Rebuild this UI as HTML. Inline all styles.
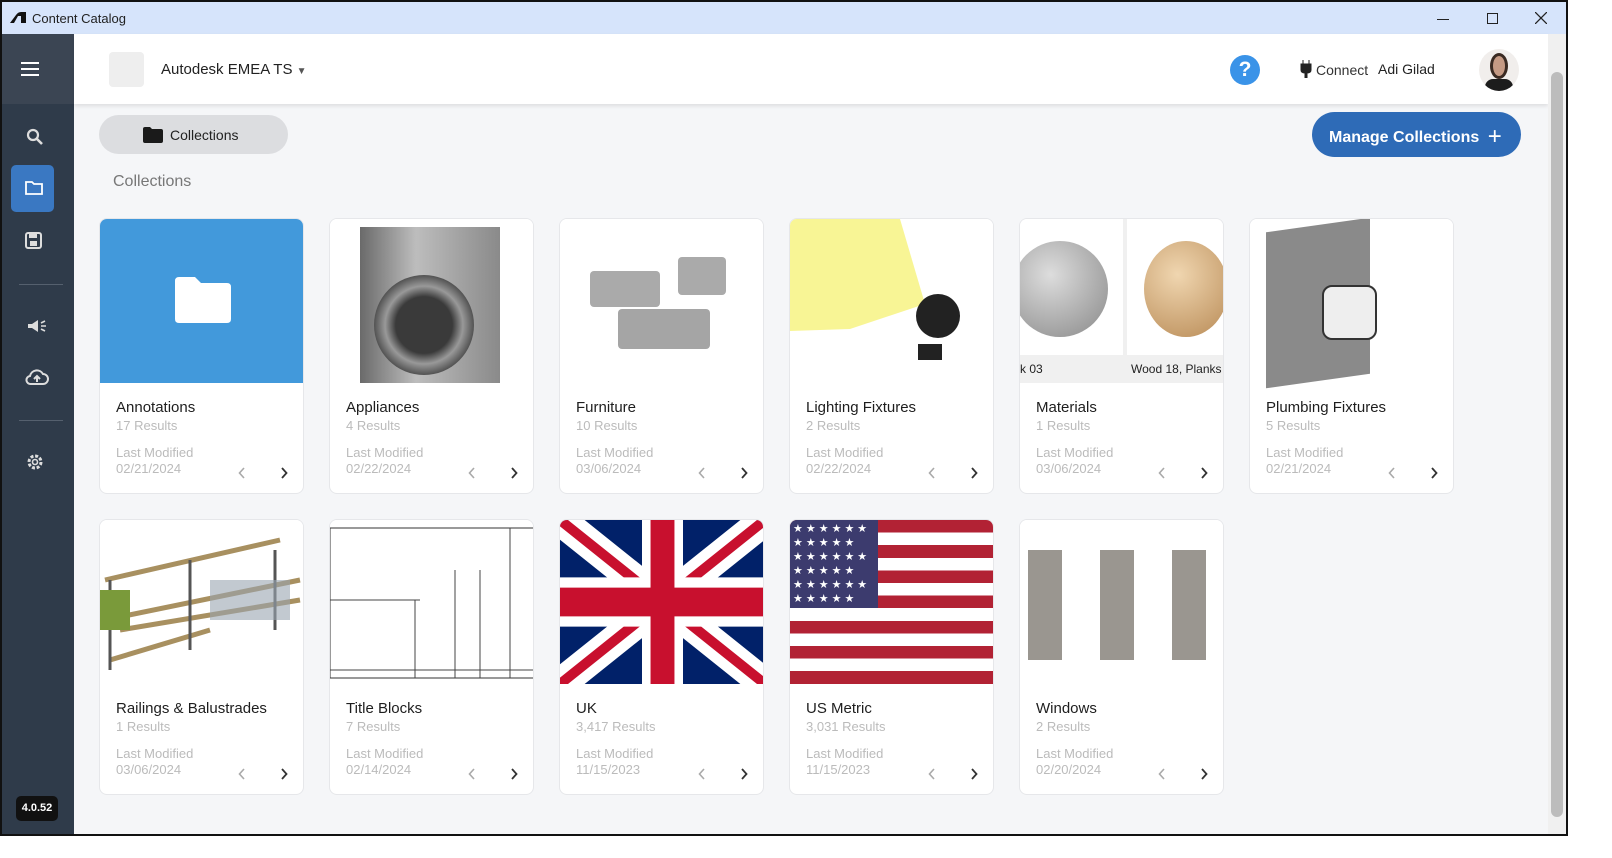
<!DOCTYPE html>
<html><head><meta charset="utf-8"><style>
*{box-sizing:border-box;margin:0;padding:0}
body{width:1612px;height:858px;background:#fff;font-family:"Liberation Sans",sans-serif;position:relative;overflow:hidden}
.win{position:absolute;left:0;top:0;width:1568px;height:836px;border:2px solid #111;background:#f5f6f8;overflow:hidden}
.title{position:absolute;left:0;top:0;right:0;height:32px;background:#d6e4fb;font-size:13px;color:#222}
.side{position:absolute;left:0;top:32px;width:72px;bottom:0;background:#2f3b4a}
.sidetop{position:absolute;left:0;top:0;width:72px;height:70px;background:#3b4553}
.hdr{position:absolute;left:72px;top:32px;right:18px;height:70px;background:#fff;box-shadow:0 2px 4px rgba(0,0,0,.1)}
.scroll{position:absolute;right:0;top:32px;width:18px;bottom:0;background:#f0f0f0}
.thumb{position:absolute;right:3px;top:38px;width:12px;height:745px;background:#bcbcbc;border-radius:6px}
.card{position:absolute;width:205px;height:276px;background:#fff;border:1px solid #e6e7ea;border-radius:8px;overflow:hidden}
.img{position:absolute;left:0;top:0;width:205px;height:164px;background:#fff}
.nm{position:absolute;left:16px;top:180px;font-size:15px;color:#1e1e1e}
.rs{position:absolute;left:16px;top:199px;font-size:13px;color:#bbb}
.lm{position:absolute;left:16px;top:226px;font-size:13px;color:#bbb;line-height:16px}
.ar{position:absolute;top:248px;width:8px;height:12px}
</style></head><body>
<svg width="0" height="0" style="position:absolute"><defs>
<symbol id="l" viewBox="0 0 8 12"><path d="M6 1L1.5 6L6 11" stroke="#aaa" stroke-width="1.6" fill="none"/></symbol>
<symbol id="r" viewBox="0 0 8 12"><path d="M2 1L6.5 6L2 11" stroke="#333" stroke-width="1.8" fill="none"/></symbol>
</defs></svg>
<div class="win">
 <div class="title">
  <svg style="position:absolute;left:8px;top:10px" width="16" height="11"><path d="M0 11 L6 3 Q8 0 11 0 L16 0 L16 11 L11 11 L11 4 L8 4 L4 11Z" fill="#111"/></svg>
  <span style="position:absolute;left:30px;top:9px">Content Catalog</span>
  <div style="position:absolute;left:1435px;top:17px;width:12px;height:1px;background:#222"></div>
  <div style="position:absolute;left:1485px;top:11px;width:11px;height:11px;border:1.5px solid #222"></div>
  <svg style="position:absolute;left:1533px;top:10px" width="12" height="12"><path d="M0 0L12 12M12 0L0 12" stroke="#222" stroke-width="1.3"/></svg>
 </div>
 <div class="side">
  <div class="sidetop"></div>
  <svg style="position:absolute;left:19px;top:28px" width="18" height="14"><path d="M0 1H18M0 7H18M0 13H18" stroke="#fff" stroke-width="2"/></svg>
  <svg style="position:absolute;left:24px;top:94px" width="18" height="18"><circle cx="7" cy="7" r="5" stroke="#ddd" stroke-width="2.2" fill="none"/><path d="M11 11L16 16" stroke="#ddd" stroke-width="2.6"/></svg>
  <div style="position:absolute;left:9px;top:131px;width:43px;height:47px;background:#3a78c2;border-radius:5px"></div>
  <svg style="position:absolute;left:23px;top:147px" width="18" height="14"><path d="M1 1H7L9 3H17V13H1Z" stroke="#fff" stroke-width="1.8" fill="none"/></svg>
  <svg style="position:absolute;left:23px;top:198px" width="18" height="18"><rect x="1" y="1" width="15" height="15" rx="2" stroke="#ddd" stroke-width="2" fill="none"/><rect x="5" y="9" width="7" height="5" fill="#ddd"/><rect x="4" y="2" width="8" height="4" fill="#ddd"/></svg>
  <div style="position:absolute;left:17px;top:250px;width:44px;height:1px;background:#55606e"></div>
  <svg style="position:absolute;left:24px;top:284px" width="22" height="18"><path d="M2 6H6L12 2V14L6 10H2Z" fill="#ddd"/><path d="M15 5L19 3M15 8H20M15 11L19 13" stroke="#ddd" stroke-width="1.6"/></svg>
  <svg style="position:absolute;left:23px;top:334px" width="24" height="18"><path d="M6 16H18A5 5 0 0 0 18 6A7 7 0 0 0 5 8A4 4 0 0 0 6 16Z" stroke="#ddd" stroke-width="2" fill="none"/><path d="M12 14V8M9 11L12 8L15 11" stroke="#ddd" stroke-width="2" fill="none"/></svg>
  <div style="position:absolute;left:17px;top:386px;width:44px;height:1px;background:#55606e"></div>
  <svg style="position:absolute;left:23px;top:418px" width="20" height="20" viewBox="0 0 20 20"><circle cx="10" cy="10" r="6" stroke="#ddd" stroke-width="3" fill="none" stroke-dasharray="3 1.7"/><circle cx="10" cy="10" r="2.5" stroke="#ddd" stroke-width="1.6" fill="none"/></svg>
  <div style="position:absolute;left:14px;top:762px;width:42px;height:25px;background:#111;border-radius:5px;color:#fff;font-size:11px;font-weight:bold;text-align:center;line-height:25px">4.0.52</div>
 </div>
 <div class="hdr">
  <div style="position:absolute;left:35px;top:18px;width:35px;height:35px;background:#eee;border-radius:4px"></div>
  <div style="position:absolute;left:87px;top:27px;font-size:15px;color:#222">Autodesk EMEA TS <span style="font-size:10px;color:#555">▼</span></div>
  <div style="position:absolute;left:1156px;top:21px;width:30px;height:30px;border-radius:50%;background:#3a93e8;color:#fff;font-weight:bold;font-size:21px;text-align:center;line-height:30px">?</div>
  <svg style="position:absolute;left:1226px;top:26px" width="12" height="18"><path d="M3 0V4M9 0V4M1 4H11V10Q11 13 7 13V18H5V13Q1 13 1 10Z" fill="#222" stroke="#222" stroke-width="1"/></svg>
  <div style="position:absolute;left:1242px;top:28px;font-size:14px;color:#333">Connect</div>
  <div style="position:absolute;left:1304px;top:27px;font-size:14px;color:#222">Adi Gilad</div>
  <div style="position:absolute;left:1405px;top:15px;width:40px;height:42px;border-radius:50%;background:#f1eeec;overflow:hidden"><div style="position:absolute;left:11px;top:4px;width:18px;height:26px;border-radius:50%;background:#c59a84;border:3px solid #3a2a22"></div><div style="position:absolute;left:6px;top:30px;width:28px;height:14px;background:#1c1c1c;border-radius:8px 8px 0 0"></div></div>
 </div>
 <div style="position:absolute;left:97px;top:113px;width:189px;height:39px;background:#dcdde0;border-radius:20px"></div>
 <svg style="position:absolute;left:141px;top:125px" width="20" height="16"><path d="M0 2Q0 0 2 0H7L9 2H18Q20 2 20 4V14Q20 16 18 16H2Q0 16 0 14Z" fill="#1a1a1a"/></svg>
 <div style="position:absolute;left:168px;top:125px;font-size:14px;color:#222">Collections</div>
 <div style="position:absolute;left:1310px;top:110px;width:209px;height:45px;background:#2e6bb7;border-radius:23px;color:#fff;font-size:16px;font-weight:bold;line-height:45px;padding-left:17px">Manage Collections <span style="font-size:24px;font-weight:normal;position:relative;top:2px;left:4px">+</span></div>
 <div style="position:absolute;left:111px;top:171px;font-size:16px;color:#777">Collections</div>

 <div class="card" style="left:97px;top:216px"><div class="img" style="background:#4299db"><svg style="position:absolute;left:75px;top:58px" width="56" height="46"><path d="M0 4Q0 0 4 0H20L26 6H52Q56 6 56 10V42Q56 46 52 46H4Q0 46 0 42Z" fill="#fff"/></svg></div><div class="nm">Annotations</div><div class="rs">17 Results</div><div class="lm">Last Modified<br>02/21/2024</div><svg class="ar" style="left:138px"><use href="#l"/></svg><svg class="ar" style="left:180px"><use href="#r"/></svg></div>
 <div class="card" style="left:327px;top:216px"><div class="img"><div style="position:absolute;left:30px;top:8px;width:140px;height:156px;background:linear-gradient(90deg,#6a6a6a,#bdbdbd 40%,#8a8a8a);"></div><div style="position:absolute;left:44px;top:56px;width:100px;height:100px;border-radius:50%;background:radial-gradient(#3a3a3a 40%,#999 55%,#555 70%)"></div></div><div class="nm">Appliances</div><div class="rs">4 Results</div><div class="lm">Last Modified<br>02/22/2024</div><svg class="ar" style="left:138px"><use href="#l"/></svg><svg class="ar" style="left:180px"><use href="#r"/></svg></div>
 <div class="card" style="left:557px;top:216px"><div class="img"><div style="position:absolute;left:30px;top:52px;width:70px;height:36px;background:#aaa;border-radius:4px"></div><div style="position:absolute;left:118px;top:38px;width:48px;height:38px;background:#aaa;border-radius:4px"></div><div style="position:absolute;left:58px;top:90px;width:92px;height:40px;background:#a5a5a5;border-radius:4px"></div></div><div class="nm">Furniture</div><div class="rs">10 Results</div><div class="lm">Last Modified<br>03/06/2024</div><svg class="ar" style="left:138px"><use href="#l"/></svg><svg class="ar" style="left:180px"><use href="#r"/></svg></div>
 <div class="card" style="left:787px;top:216px"><div class="img"><svg width="205" height="164"><path d="M0 0H110L135 85L60 110L0 112Z" fill="#f6f37a" opacity=".8"/><circle cx="148" cy="97" r="22" fill="#222"/><rect x="128" y="125" width="24" height="16" fill="#222"/></svg></div><div class="nm">Lighting Fixtures</div><div class="rs">2 Results</div><div class="lm">Last Modified<br>02/22/2024</div><svg class="ar" style="left:138px"><use href="#l"/></svg><svg class="ar" style="left:180px"><use href="#r"/></svg></div>
 <div class="card" style="left:1017px;top:216px"><div class="img" style="background:#f0f0f0"><div style="position:absolute;left:0;top:0;width:103px;height:136px;background:#fff"></div><div style="position:absolute;left:107px;top:0;width:98px;height:136px;background:#fff"></div><div style="position:absolute;left:-8px;top:22px;width:96px;height:96px;border-radius:50%;background:radial-gradient(circle at 40% 35%,#ddd,#888)"></div><div style="position:absolute;left:124px;top:22px;width:84px;height:96px;border-radius:50%;background:radial-gradient(circle at 40% 35%,#f0d6b0,#b88a55)"></div><div style="position:absolute;left:0;top:143px;font-size:12px;color:#222">k 03</div><div style="position:absolute;left:111px;top:143px;font-size:12px;color:#222;white-space:nowrap">Wood 18, Planks</div></div><div class="nm">Materials</div><div class="rs">1 Results</div><div class="lm">Last Modified<br>03/06/2024</div><svg class="ar" style="left:138px"><use href="#l"/></svg><svg class="ar" style="left:180px"><use href="#r"/></svg></div>
 <div class="card" style="left:1247px;top:216px"><div class="img"><div style="position:absolute;left:16px;top:6px;width:104px;height:156px;background:#8a8a8a;transform:skewY(-8deg)"></div><div style="position:absolute;left:72px;top:66px;width:55px;height:55px;background:#eee;border-radius:10px;border:2px solid #333"></div></div><div class="nm">Plumbing Fixtures</div><div class="rs">5 Results</div><div class="lm">Last Modified<br>02/21/2024</div><svg class="ar" style="left:138px"><use href="#l"/></svg><svg class="ar" style="left:180px"><use href="#r"/></svg></div>

 <div class="card" style="left:97px;top:517px"><div class="img"><svg width="205" height="164"><path d="M5 60L180 20M5 100L200 60M20 110L200 80M10 140L110 110" stroke="#a89060" stroke-width="5"/><path d="M10 60V150M90 40V130M175 30V110" stroke="#555" stroke-width="3"/><rect x="0" y="70" width="30" height="40" fill="#7a9a3a"/><rect x="110" y="60" width="80" height="40" fill="#99a5b0" opacity=".6"/></svg></div><div class="nm">Railings &amp; Balustrades</div><div class="rs">1 Results</div><div class="lm">Last Modified<br>03/06/2024</div><svg class="ar" style="left:138px"><use href="#l"/></svg><svg class="ar" style="left:180px"><use href="#r"/></svg></div>
 <div class="card" style="left:327px;top:517px"><div class="img"><svg width="205" height="164"><rect x="0" y="8" width="205" height="150" fill="none" stroke="#333"/><path d="M180 8V158M0 80H90M85 80V158M125 50V158M150 50V158M0 150H205" stroke="#444"/></svg></div><div class="nm">Title Blocks</div><div class="rs">7 Results</div><div class="lm">Last Modified<br>02/14/2024</div><svg class="ar" style="left:138px"><use href="#l"/></svg><svg class="ar" style="left:180px"><use href="#r"/></svg></div>
 <div class="card" style="left:557px;top:517px"><div class="img"><svg width="205" height="164" viewBox="0 0 60 40" preserveAspectRatio="none"><rect width="60" height="40" fill="#012169"/><path d="M0 0L60 40M60 0L0 40" stroke="#fff" stroke-width="8"/><path d="M0 0L60 40M60 0L0 40" stroke="#c8102e" stroke-width="2.6"/><path d="M30 0V40M0 20H60" stroke="#fff" stroke-width="12"/><path d="M30 0V40M0 20H60" stroke="#c8102e" stroke-width="7"/></svg></div><div class="nm">UK</div><div class="rs">3,417 Results</div><div class="lm">Last Modified<br>11/15/2023</div><svg class="ar" style="left:138px"><use href="#l"/></svg><svg class="ar" style="left:180px"><use href="#r"/></svg></div>
 <div class="card" style="left:787px;top:517px"><div class="img" style="background:repeating-linear-gradient(#b22234 0 12.6px,#fff 12.6px 25.2px)"><div style="position:absolute;left:0;top:0;width:88px;height:88px;background:#3c3b6e;color:#fff;font-size:11px;line-height:14px;letter-spacing:3px;padding:2px 3px">★★★★★★<br>★★★★★<br>★★★★★★<br>★★★★★<br>★★★★★★<br>★★★★★</div></div><div class="nm">US Metric</div><div class="rs">3,031 Results</div><div class="lm">Last Modified<br>11/15/2023</div><svg class="ar" style="left:138px"><use href="#l"/></svg><svg class="ar" style="left:180px"><use href="#r"/></svg></div>
 <div class="card" style="left:1017px;top:517px"><div class="img"><div style="position:absolute;left:8px;top:30px;width:34px;height:110px;background:#9a9690"></div><div style="position:absolute;left:80px;top:30px;width:34px;height:110px;background:#9a9690"></div><div style="position:absolute;left:152px;top:30px;width:34px;height:110px;background:#9a9690"></div></div><div class="nm">Windows</div><div class="rs">2 Results</div><div class="lm">Last Modified<br>02/20/2024</div><svg class="ar" style="left:138px"><use href="#l"/></svg><svg class="ar" style="left:180px"><use href="#r"/></svg></div>

 <div class="scroll"><div class="thumb"></div></div>
</div>
</body></html>
